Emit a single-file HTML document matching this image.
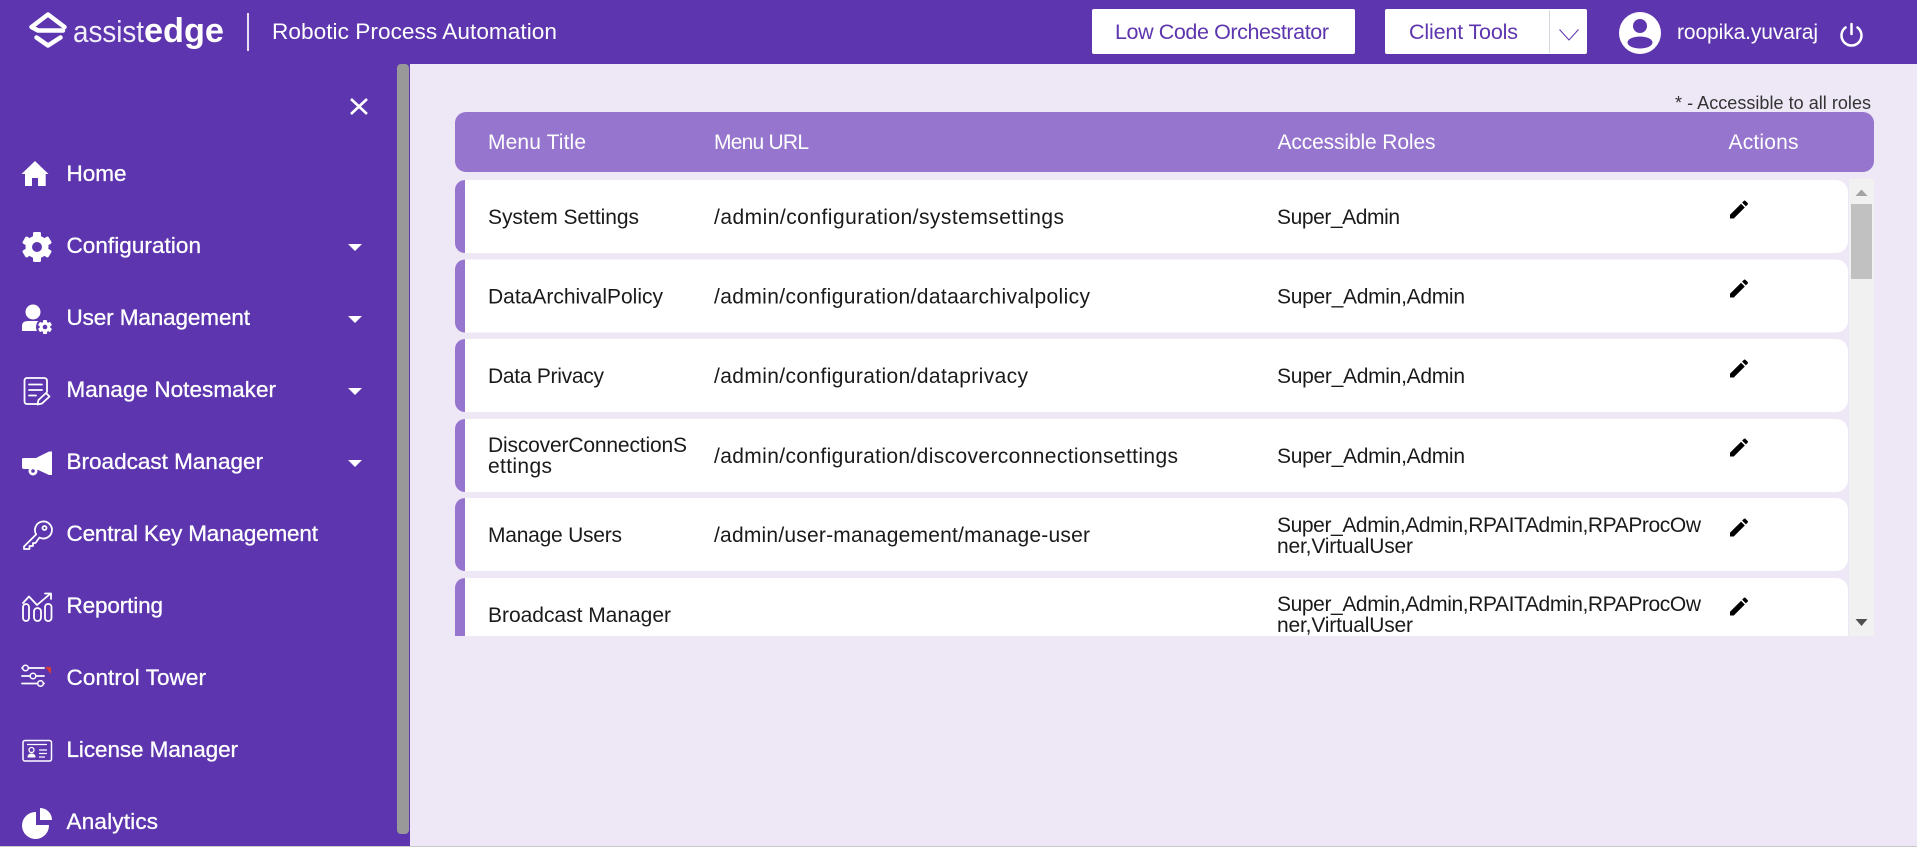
<!DOCTYPE html>
<html lang="en"><head><meta charset="utf-8"><title>Menu Management</title>
<style>
html,body{margin:0;padding:0;width:1917px;height:847px;overflow:hidden;background:#ede7f6}
svg{display:block;position:absolute;left:0;top:0}
text{font-family:"Liberation Sans",sans-serif}
.s{font-size:22.500px;fill:#fff;stroke:#fff;stroke-width:.3}
.r{font-size:21px;fill:#1a1a1a}
.h{font-size:21px;fill:#fff}
.t{font-size:22.600px;fill:#fff}
.b{font-size:21.500px;fill:#5d35ae}
.i{fill:none;stroke:#fff;stroke-width:1.8;stroke-linecap:round;stroke-linejoin:round}
</style></head><body>
<svg width="1917" height="847" viewBox="0 0 1917 847" xmlns="http://www.w3.org/2000/svg">
<defs><clipPath id="c"><rect x="450" y="178" width="1430" height="458"/></clipPath></defs>
<rect width="1917" height="847" fill="#ede7f6"/>
<rect y="846" width="1917" height="1" fill="#c9c9c9"/>
<!-- top bar -->
<rect width="1917" height="64" fill="#5d35ae"/>
<!-- sidebar -->
<rect y="64" width="410" height="782" fill="#5d35ae"/>
<rect x="397" y="64" width="12" height="770" rx="4" fill="#999"/>
<!-- logo -->
<g fill="none" stroke="#fff" stroke-width="4.500" stroke-linejoin="round" stroke-linecap="round">
<path d="M63 30.500H38L31.500 27L48 14.500L64.500 27"/><path d="M36.500 37.500L48 45.500L60.500 37.500"/>
</g>
<text x="73" y="42" font-size="31" fill="#fff" fill-opacity=".92" textLength="71" lengthAdjust="spacingAndGlyphs">assist</text>
<text x="144" y="42" font-size="34" font-weight="700" fill="#fff" textLength="80" lengthAdjust="spacingAndGlyphs">edge</text>
<rect x="247" y="13" width="2" height="38" fill="#e8e0f5"/>
<text class="t" x="272" y="39" textLength="285">Robotic Process Automation</text>
<!-- buttons -->
<rect x="1092" y="9" width="263" height="45" rx="2" fill="#fff"/>
<text class="b" x="1115" y="39" textLength="214">Low Code Orchestrator</text>
<rect x="1385" y="9" width="202" height="45" rx="2" fill="#fff"/>
<rect x="1549" y="10" width="1" height="43" fill="#d8d8e0"/>
<text class="b" x="1409" y="39" textLength="109">Client Tools</text>
<path d="M1559.500 29.500L1569 40L1578.500 29.500" fill="none" stroke="#5d35ae" stroke-width="1"/>
<!-- user -->
<circle cx="1640" cy="33" r="21" fill="#fff"/>
<circle cx="1640" cy="26" r="7" fill="#5d35ae"/>
<ellipse cx="1640" cy="42.500" rx="12.500" ry="6" fill="#5d35ae"/>
<text class="h" x="1677" y="39" textLength="141">roopika.yuvaraj</text>
<g fill="none" stroke="#fff" stroke-width="2.500" stroke-linecap="round"><path d="M1851.500 24V34"/><path d="M1845.500 27.500A10 10 0 1 0 1857.500 27.500"/></g>
<!-- close -->
<path d="M351 99L367 114M367 99L351 114" stroke="#fff" stroke-width="2.600" fill="none"/>
<!-- sidebar labels -->
<path d="M35 161L48.500 174H45.700V186H38V178H32V186H25V174H21.500Z" fill="#fff"/>
<text class="s" x="66.500" y="181" textLength="60">Home</text>
<g fill="#fff"><circle cx="37" cy="247" r="11.500"/><rect x="33" y="232" width="8" height="30" rx="1.500"/><rect x="33" y="232" width="8" height="30" rx="1.500" transform="rotate(60 37 247)"/><rect x="33" y="232" width="8" height="30" rx="1.500" transform="rotate(120 37 247)"/></g>
<circle cx="37" cy="247" r="5" fill="#5d35ae"/>
<text class="s" x="66.500" y="253" textLength="134.500">Configuration</text>
<circle cx="33" cy="312" r="7.500" fill="#fff"/>
<path d="M22 331V326Q22 321 28 321H38Q42 321 42 325V331Z" fill="#fff"/>
<circle cx="45" cy="327" r="9" fill="#5d35ae"/>
<g fill="#fff"><circle cx="45" cy="327" r="5.300"/><rect x="43" y="320" width="4" height="14" rx=".8"/><rect x="43" y="320" width="4" height="14" rx=".8" transform="rotate(60 45 327)"/><rect x="43" y="320" width="4" height="14" rx=".8" transform="rotate(120 45 327)"/></g>
<circle cx="45" cy="327" r="2.300" fill="#5d35ae"/>
<text class="s" x="66.500" y="325" textLength="183.500">User Management</text>
<g class="i"><path d="M37 404H27Q24.500 404 24.500 401V381Q24.500 378 27 378H44Q47 378 47 381V392"/><path d="M29 384.500H42M29 390H42M29 395.500H36"/><path d="M37.500 404.500L38.500 400L46 393L49.500 396.500L42 403.500Z"/></g>
<text class="s" x="66.500" y="397" textLength="209.500">Manage Notesmaker</text>
<path d="M22 459Q22 458 24 458H36L49 451.500H52V475H49L36 469H24Q22 469 22 467Z" fill="#fff"/>
<circle cx="33" cy="471" r="4.500" fill="#fff"/><circle cx="33" cy="471" r="1.800" fill="#5d35ae"/>
<text class="s" x="66.500" y="469" textLength="196.500">Broadcast Manager</text>
<g class="i" stroke-width="1.500"><path d="M36.200 534.400L24 546.500V549H29.500V546H33V543H35.500L39.500 537.500A8.500 8.500 0 1 0 36.200 534.400Z"/><circle cx="44.500" cy="528" r="2"/></g>
<text class="s" x="66.500" y="541" textLength="251.500">Central Key Management</text>
<g class="i" stroke-width="1.700"><path d="M23 603L29 596.500L37 605L50 594"/><path d="M45 593.500H51V599"/><rect x="23" y="604" width="6" height="17" rx="3"/><rect x="34" y="608" width="7" height="13" rx="3.500"/><rect x="45" y="604" width="6.500" height="17" rx="3"/></g>
<text class="s" x="66.500" y="613" textLength="96.500">Reporting</text>
<g class="i" stroke-width="1.500"><path d="M22 668H44M22 676H44M22 683.500H44"/></g>
<circle cx="25.500" cy="668" r="2.800" fill="#5d35ae" stroke="#fff" stroke-width="1.500"/>
<circle cx="33" cy="676" r="2.800" fill="#5d35ae" stroke="#fff" stroke-width="1.500"/>
<circle cx="40.500" cy="683.500" r="2.800" fill="#5d35ae" stroke="#fff" stroke-width="1.500"/>
<path d="M45 667H51V674Z" fill="#d33a3a"/>
<text class="s" x="66.500" y="685" textLength="139.500">Control Tower</text>
<rect x="23" y="740.500" width="28.500" height="20.500" rx="2" fill="none" stroke="#fff" stroke-width="1.500"/>
<path d="M27 744.500H47M39 750H47M39 753.500H47M39 757H45" stroke="#fff" stroke-width="1.300" fill="none"/>
<circle cx="31.500" cy="750" r="2.500" fill="none" stroke="#fff" stroke-width="1.300"/>
<path d="M27.500 757.500Q27.500 753.500 31.500 753.500T35.500 757.500Z" fill="#fff"/>
<text class="s" x="66.500" y="757" textLength="171.500">License Manager</text>
<path d="M36 812V825H49A13.500 13.500 0 1 1 36 812Z" fill="#fff"/>
<path d="M40 808A12 12 0 0 1 52 820H40Z" fill="#fff"/>
<text class="s" x="66.500" y="829" textLength="91.500">Analytics</text>
<g fill="#fff"><path d="M348 244H362L355 251Z"/><path d="M348 316H362L355 323Z"/><path d="M348 388H362L355 395Z"/><path d="M348 460H362L355 467Z"/></g>
<!-- table head -->
<text x="1675" y="109" font-size="18" fill="#333" textLength="196">* - Accessible to all roles</text>
<rect x="455" y="112" width="1419" height="60" rx="11" fill="#9575cd"/>
<text class="h" x="488" y="149" textLength="98">Menu Title</text>
<text class="h" x="714" y="149" textLength="95">Menu URL</text>
<text class="h" x="1277.500" y="149" textLength="158">Accessible Roles</text>
<text class="h" x="1728.500" y="149" textLength="70">Actions</text>
<!-- rows -->
<g clip-path="url(#c)">
<rect x="1849" y="179" width="25" height="457" fill="#f1f1f1"/>
<rect x="1851" y="204" width="21" height="75" fill="#c1c1c1"/>
<path d="M1855.500 196L1861.500 189.500L1867.500 196Z" fill="#a3a3a3"/>
<path d="M1855.500 619L1861.500 626L1867.500 619Z" fill="#505050"/>
<g fill="#9575cd">
<rect x="455" y="180" width="30" height="73" rx="10"/><rect x="455" y="259.500" width="30" height="73" rx="10"/><rect x="455" y="339" width="30" height="73" rx="10"/><rect x="455" y="419" width="30" height="73" rx="10"/><rect x="455" y="498" width="30" height="73" rx="10"/><rect x="455" y="578" width="30" height="73" rx="10"/>
</g>
<g fill="#fff">
<path d="M465 180H1836A12 12 0 0 1 1848 192V241A12 12 0 0 1 1836 253H465Z"/>
<path d="M465 259.500H1836A12 12 0 0 1 1848 271.500V320.500A12 12 0 0 1 1836 332.500H465Z"/>
<path d="M465 339H1836A12 12 0 0 1 1848 351V400A12 12 0 0 1 1836 412H465Z"/>
<path d="M465 419H1836A12 12 0 0 1 1848 431V480A12 12 0 0 1 1836 492H465Z"/>
<path d="M465 498H1836A12 12 0 0 1 1848 510V559A12 12 0 0 1 1836 571H465Z"/>
<path d="M465 578H1836A12 12 0 0 1 1848 590V639A12 12 0 0 1 1836 651H465Z"/>
</g>
<text class="r" x="488" y="224" textLength="151">System Settings</text>
<text class="r" x="714" y="224" textLength="350">/admin/configuration/systemsettings</text>
<text class="r" x="1277" y="224" textLength="123">Super_Admin</text>
<text class="r" x="488" y="303.500" textLength="175">DataArchivalPolicy</text>
<text class="r" x="714" y="303.500" textLength="376">/admin/configuration/dataarchivalpolicy</text>
<text class="r" x="1277" y="303.500" textLength="188">Super_Admin,Admin</text>
<text class="r" x="488" y="383" textLength="116">Data Privacy</text>
<text class="r" x="714" y="383" textLength="314">/admin/configuration/dataprivacy</text>
<text class="r" x="1277" y="383" textLength="188">Super_Admin,Admin</text>
<text class="r" x="488" y="452" textLength="199">DiscoverConnectionS</text>
<text class="r" x="488" y="473" textLength="64">ettings</text>
<text class="r" x="714" y="463" textLength="464">/admin/configuration/discoverconnectionsettings</text>
<text class="r" x="1277" y="463" textLength="188">Super_Admin,Admin</text>
<text class="r" x="488" y="542" textLength="134">Manage Users</text>
<text class="r" x="714" y="542" textLength="376">/admin/user-management/manage-user</text>
<text class="r" x="1277" y="532" textLength="424">Super_Admin,Admin,RPAITAdmin,RPAProcOw</text>
<text class="r" x="1277" y="553" textLength="136">ner,VirtualUser</text>
<text class="r" x="488" y="622" textLength="183">Broadcast Manager</text>
<text class="r" x="1277" y="611" textLength="424">Super_Admin,Admin,RPAITAdmin,RPAProcOw</text>
<text class="r" x="1277" y="632" textLength="136">ner,VirtualUser</text>
<g fill="#000">
<path transform="translate(1727 197.500)" d="M3 17.250V21h3.750L17.810 9.940l-3.750-3.750L3 17.250zM20.710 7.040c.39-.39.39-1.020 0-1.410l-2.340-2.340c-.39-.39-1.020-.39-1.410 0l-1.830 1.830 3.750 3.750 1.830-1.830z"/>
<path transform="translate(1727 276.500)" d="M3 17.250V21h3.750L17.810 9.940l-3.750-3.750L3 17.250zM20.710 7.040c.39-.39.39-1.020 0-1.410l-2.340-2.340c-.39-.39-1.020-.39-1.410 0l-1.830 1.830 3.750 3.750 1.830-1.830z"/>
<path transform="translate(1727 356.500)" d="M3 17.250V21h3.750L17.810 9.940l-3.750-3.750L3 17.250zM20.710 7.040c.39-.39.39-1.020 0-1.410l-2.340-2.340c-.39-.39-1.020-.39-1.410 0l-1.830 1.830 3.750 3.750 1.830-1.830z"/>
<path transform="translate(1727 435.500)" d="M3 17.250V21h3.750L17.810 9.940l-3.750-3.750L3 17.250zM20.710 7.040c.39-.39.39-1.020 0-1.410l-2.340-2.340c-.39-.39-1.020-.39-1.410 0l-1.830 1.830 3.750 3.750 1.830-1.830z"/>
<path transform="translate(1727 515.500)" d="M3 17.250V21h3.750L17.810 9.940l-3.750-3.750L3 17.250zM20.710 7.040c.39-.39.39-1.020 0-1.410l-2.340-2.340c-.39-.39-1.020-.39-1.410 0l-1.830 1.830 3.750 3.750 1.830-1.830z"/>
<path transform="translate(1727 594.500)" d="M3 17.250V21h3.750L17.810 9.940l-3.750-3.750L3 17.250zM20.710 7.040c.39-.39.39-1.020 0-1.410l-2.340-2.340c-.39-.39-1.020-.39-1.410 0l-1.830 1.830 3.750 3.750 1.830-1.830z"/>
</g>
</g>
</svg>
</body></html>
